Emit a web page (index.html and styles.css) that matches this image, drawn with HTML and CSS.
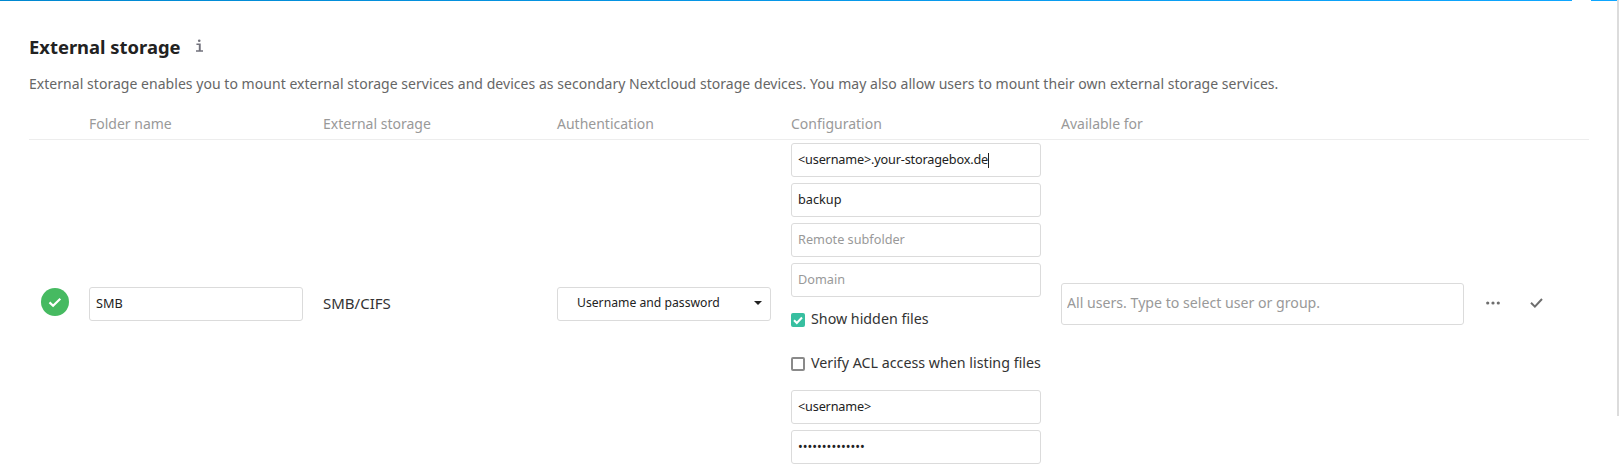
FILE: index.html
```html
<!DOCTYPE html>
<html lang="en">
<head>
<meta charset="utf-8">
<title>External storage</title>
<link rel="stylesheet" href="styles.css">
</head>
<body>
<div class="topbar"><span class="topbar-a"></span><span class="topbar-gap"></span><span class="topbar-b"></span></div>
<main class="section">
  <h2 class="title">External storage
    <svg class="info" width="7" height="13" viewBox="0 0 8 14"><circle cx="3.7" cy="1.5" r="1.5"/><path d="M0.5 4.8h4.9v7.5H8V14H0v-1.7h3.2V6.5H.5z"/></svg>
  </h2>
  <p class="intro">External storage enables you to mount external storage services and devices as secondary Nextcloud storage devices. You may also allow users to mount their own external storage services.</p>
  <div class="grid head">
    <span></span>
    <span>Folder name</span>
    <span>External storage</span>
    <span>Authentication</span>
    <span>Configuration</span>
    <span>Available for</span>
  </div>
  <div class="grid row">
    <div class="status"><svg width="14" height="14" viewBox="0 0 14 14"><path d="M1.5 7.4l3.6 3.4 7.2-7" fill="none" stroke="#fff" stroke-width="2.2"/></svg></div>
    <input class="field" type="text" value="SMB">
    <div class="type">SMB/CIFS</div>
    <div class="select"><span>Username and password</span><svg width="8" height="4" viewBox="0 0 8 4"><path d="M0 0h8L4 4z"/></svg></div>
    <div class="config">
      <div class="caret-wrap">
        <input class="field wide tight" type="text" value="&lt;username&gt;.your-storagebox.de">
        <span class="caret"></span>
      </div>
      <input class="field wide" type="text" value="backup">
      <input class="field wide" type="text" placeholder="Remote subfolder">
      <input class="field wide" type="text" placeholder="Domain">
      <label class="check first"><span class="box on"><svg width="14" height="14" viewBox="0 0 14 14"><path d="M3 7.3l2.8 2.7L11 4.5" fill="none" stroke="#fff" stroke-width="2"/></svg></span>Show hidden files</label>
      <label class="check second"><span class="box"></span>Verify ACL access when listing files</label>
      <input class="field wide tight" type="text" value="&lt;username&gt;">
      <input class="field wide last" type="password" value="12345678901234">
    </div>
    <div class="avail">
      <input class="users" type="text" placeholder="All users. Type to select user or group.">
      <svg class="more" width="14" height="4" viewBox="0 0 14 4"><circle cx="1.7" cy="2" r="1.6"/><circle cx="7" cy="2" r="1.6"/><circle cx="12.3" cy="2" r="1.6"/></svg>
      <svg class="save" width="13" height="10" viewBox="0 0 13 10"><path d="M1 4.8l3.9 3.8L12 1" fill="none" stroke="#6e6e6e" stroke-width="2"/></svg>
    </div>
  </div>
</main>
<div class="scroll"></div>
</body>
</html>
```
FILE: styles.css
```css
html, body { margin: 0; height: 466px; overflow: hidden; background: #fff; }
body { font-family: "Noto Sans", sans-serif; font-size: 14px; color: #222; position: relative; }
.topbar { display: flex; height: 1px; }
.topbar-a { width: 1572px; background: linear-gradient(to right, #0088d0, #0ea6ff); }
.topbar-gap { width: 19px; }
.topbar-b { flex: 1; background: #0ea6ff; }
.section { padding: 34px 30px 0 29px; }
.title { margin: 0; font-size: 18.4px; line-height: 24px; font-weight: 700; color: #222; display: flex; align-items: center; gap: 15px; }
.info { fill: #72727c; margin-bottom: 4px; }
.intro { margin: 15px 0 0; font-size: 14px; letter-spacing: 0.04px; line-height: 20px; color: #666; white-space: nowrap; }
.grid { display: grid; grid-template-columns: 60px 234px 234px 234px 270px 1fr; }
.head { margin-top: 15px; height: 30px; line-height: 30px; color: #999; border-bottom: 1px solid #ededed; font-size: 14px; }
.row { align-items: center; padding-top: 3px; }
.field { box-sizing: border-box; display: block; width: 214px; height: 34px; margin: 0; padding: 0 6px 2px; border: 1px solid #dbdbdb; border-radius: 3px; font: 12.7px "Noto Sans", sans-serif; color: #222; background: #fff; outline: none; }
.field::placeholder, .users::placeholder { color: #999; opacity: 1; }
.wide { width: 250px; margin-bottom: 6px; }
.tight { letter-spacing: -0.18px; }
.last { margin-bottom: 0; }
.status { width: 28px; height: 28px; margin: 0 0 3px 12px; border-radius: 50%; background: #46ba61; display: flex; align-items: center; justify-content: center; }
.type { font-size: 15px; color: #333; padding-bottom: 2px; }
.select { box-sizing: border-box; width: 214px; height: 34px; border: 1px solid #dbdbdb; border-radius: 3px; display: flex; align-items: center; justify-content: space-between; padding: 0 8px 2px 19px; font-size: 12.2px; color: #222; }
.select svg { fill: #222; }
.caret-wrap { position: relative; width: 250px; }
.caret { position: absolute; left: 197px; top: 10px; width: 1px; height: 15px; background: #222; }
.check { display: flex; align-items: flex-start; gap: 6px; height: 20px; line-height: 18px; font-size: 14.25px; color: #333; white-space: nowrap; }
.first { margin: 13px 0 0; }
.second { margin: 24px 0 16px; }
.box { box-sizing: border-box; width: 14px; height: 14px; margin-top: 3px; border: 2px solid #8a8a8a; border-radius: 2px; display: block; flex: none; }
.box.on { border: 0; background: #37bfa0; }
.box svg { display: block; }
.avail { display: flex; align-items: center; }
.users { box-sizing: border-box; width: 403px; height: 42px; padding: 0 5px 2px; border: 1px solid #dbdbdb; border-radius: 3px; font: 14.15px "Noto Sans", sans-serif; outline: none; }
.more { fill: #6e6e6e; margin: 0 0 2px 22px; }
.save { margin: 0 0 2px 30px; }
.scroll { position: absolute; right: 0; top: 0; width: 2px; height: 416px; background: #dcdcdc; }
```
